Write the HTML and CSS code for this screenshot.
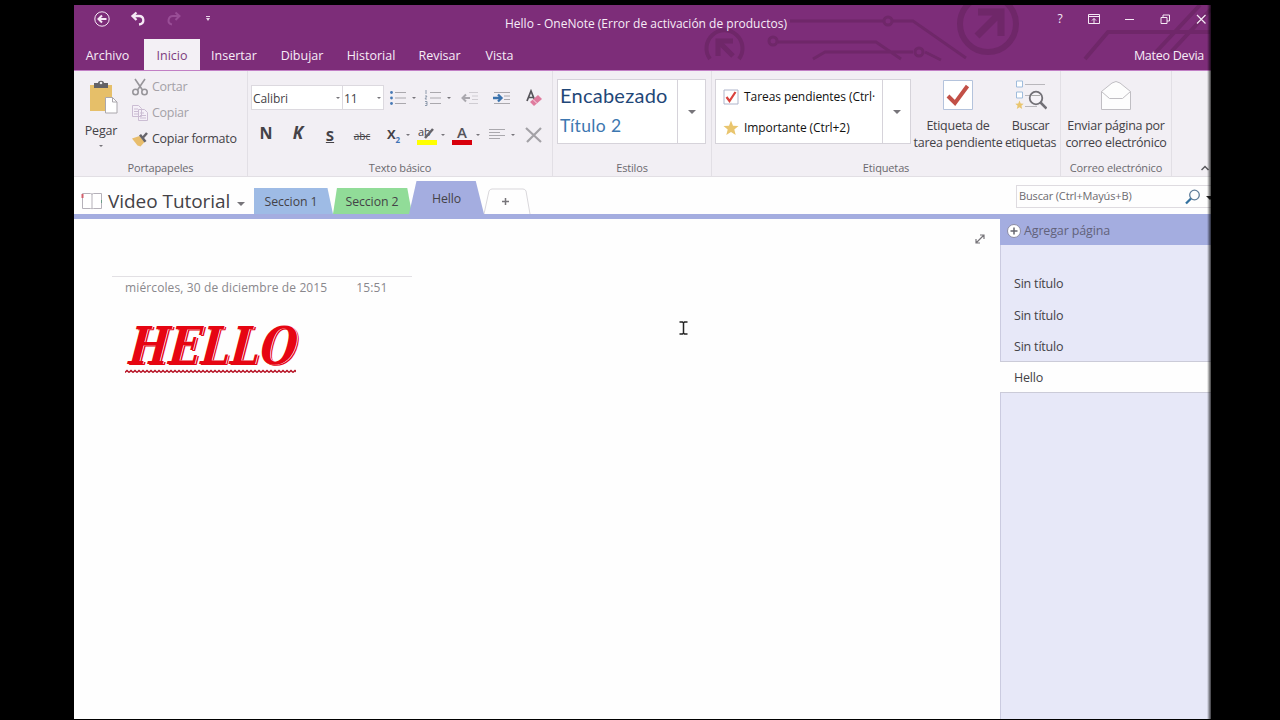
FILE: index.html
```
<!DOCTYPE html>
<html lang="es">
<head>
    <meta charset="UTF-8">
    <meta name="viewport" content="width=device-width, initial-scale=1.0">
    <title>Hello - OneNote</title>
    <link rel="stylesheet" href="styles.css">
</head>
<body>
    <div class="window">
        <header class="header">
            <svg class="circuit" width="1137" height="65" viewBox="74 5 1137 65" fill="none" stroke="#6f2769" stroke-width="3">
                <path d="M790 21h93M893 21h20L966 58M778 42h98l25 17M813 59l12-7h88M925 52l16 8"/>
                <circle cx="888" cy="21" r="4"/>
                <circle cx="773" cy="41" r="4"/>
                <circle cx="919" cy="52" r="4"/>
                <path d="M710 59a18 18 0 1 1 29 0" stroke-width="4"/>
                <path d="M718 56V41h15M719 42l14 14" stroke-width="5"/>
                <circle cx="988" cy="24" r="28" stroke-width="6"/>
                <path d="M978 12h23v24M1000 13l-23 23" stroke-width="7"/>
                <path d="M1085 59l23-27h102M1156 52l44-47M1171 52l40-43" stroke-width="4"/>
            </svg>
            <div class="titlebar">
                <div class="quick-access">
                    <svg width="16" height="16" viewBox="0 0 16 16" fill="none" stroke="#f5e9f5"><circle cx="8" cy="8" r="7.2"/><path d="M12.500 8H4.500M8 4.500L4.500 8 8 11.500" stroke-width="2"/></svg>
                    <svg width="16" height="16" viewBox="0 0 16 16" fill="none" stroke="#f5e9f5" stroke-width="2.300"><path d="M6.500 1.500L2.500 5l4 4M3 5h6c5 0 6.500 7.500 0 8.500"/></svg>
                    <svg width="16" height="16" viewBox="0 0 16 16" fill="none" stroke="#994d96" stroke-width="2"><path d="M9.500 1.500L13.500 5l-4 4M13 5H7c-5 0-6.500 7.500-1 8.500"/></svg>
                    <svg class="qa-more" width="6" height="6" viewBox="0 0 6 6" fill="#e8d4e8"><path d="M1 0h4v1H1zM1 2h4L3 5z"/></svg>
                </div>
                <div class="title">Hello - OneNote (Error de activación de productos)</div>
                <div class="window-buttons">
                    <span class="help">?</span>
                    <svg class="display" width="12" height="12" viewBox="0 0 12 12" fill="none" stroke="#f5e9f5"><path d="M.5 1.500h11v9H.5zM.5 3.500h11M6 10V5.500M4 7.500l2-2 2 2"/></svg>
                    <svg width="12" height="12" viewBox="0 0 12 12" stroke="#f5e9f5"><path d="M2 6.500h9"/></svg>
                    <svg width="12" height="12" viewBox="0 0 12 12" fill="none" stroke="#f5e9f5"><path d="M2 4.500h6v6H2zM4 4V2h6.500v6H8"/></svg>
                    <svg width="12" height="12" viewBox="0 0 12 12" stroke="#f5e9f5" stroke-width="1.200"><path d="M2 2l8.500 8.500M10.500 2L2 10.500"/></svg>
                </div>
            </div>
            <nav class="tabs">
                <a class="tab tab-file">Archivo</a>
                <a class="tab tab-home active">Inicio</a>
                <a class="tab tab-insert">Insertar</a>
                <a class="tab tab-draw">Dibujar</a>
                <a class="tab tab-history">Historial</a>
                <a class="tab tab-review">Revisar</a>
                <a class="tab tab-view">Vista</a>
                <span class="account">Mateo Devia</span>
            </nav>
        </header>

        <div class="ribbon">
            <section class="group group-clipboard">
                <div class="group-body">
                    <div class="paste">
                        <svg width="30" height="34" viewBox="0 0 30 34"><path d="M1 5h22v26H1z" fill="#e6bf69"/><path d="M5 3h4c0-3 6-3 6 0h4v5H5z" fill="#636266"/><circle cx="12" cy="3" r="1.300" fill="#eee"/><path d="M16.500 17.500h7l4.500 4.500v11H16.500z" fill="#fff" stroke="#aaa7ac"/><path d="M23.500 17.500V22H28" fill="none" stroke="#aaa7ac"/></svg>
                        <span>Pegar</span>
                        <i class="caret"></i>
                    </div>
                    <ul class="clip-list">
                        <li class="disabled"><svg width="16" height="18" viewBox="0 0 16 18" fill="none" stroke="#97959a" stroke-width="1.600"><path d="M3 1l7.500 11M13 1L5.500 12"/><circle cx="3.500" cy="14" r="2.700"/><circle cx="12.500" cy="14" r="2.700"/></svg>Cortar</li>
                        <li class="disabled"><svg width="16" height="18" viewBox="0 0 16 18" fill="#f5f0f8" stroke="#cbbdd3"><path d="M.5 1.500h6l3 3v8h-9zM6.500 5.500h6l3 3v8h-9z"/><path d="M2 5h4M2 7.500h4M2 10h4M8 9h4M8 11.500h6M8 14h6"/></svg>Copiar</li>
                        <li><svg width="16" height="18" viewBox="0 0 16 18"><path d="M0 8.500l7.500-2.500 5 6-4 4.500-3-1z" fill="#e8bd6c"/><path d="M7 5.500l2-1.500 5.500 7-2 1.500z" fill="#66646a"/><path d="M11 7.500L15 3" stroke="#66646a" stroke-width="2.500"/></svg>Copiar formato</li>
                    </ul>
                </div>
                <div class="group-label">Portapapeles</div>
            </section>

            <section class="group group-text">
                <div class="group-body">
                    <div class="row">
                        <div class="combo combo-font">Calibri<i class="caret"></i></div>
                        <div class="combo combo-size">11<i class="caret"></i></div>
                        <div class="split first"><svg width="18" height="16" viewBox="0 0 18 16"><path d="M6 2.500h11M6 8h11M6 13.500h11" stroke="#aaa8ad"/><g fill="#4779b5"><circle cx="2.500" cy="2.500" r="1.400"/><circle cx="2.500" cy="8" r="1.400"/><circle cx="2.500" cy="13.500" r="1.400"/></g></svg><i class="caret"></i></div>
                        <div class="split"><svg width="18" height="16" viewBox="0 0 18 16"><path d="M6 2.500h11M6 8h11M6 13.500h11" stroke="#aaa8ad"/><path d="M2 0v4M1 6h2l-2 3h2M1 11.500h2v4H1M1.500 13.500H3" stroke="#8e9aac" fill="none"/></svg><i class="caret"></i></div>
                        <div class="tool"><svg width="18" height="14" viewBox="0 0 18 14"><path d="M8 1.500h9M11 5h6M11 8.500h6M8 12.500h9" stroke="#cfccd2"/><path d="M9 7H2M5 3.500L1.500 7 5 10.500" stroke="#aaa8ae" stroke-width="2" fill="none"/></svg></div>
                        <div class="tool"><svg width="18" height="14" viewBox="0 0 18 14"><path d="M1 1.500h16M11 5h6M11 8.500h6M1 12.500h16" stroke="#aaa8ad"/><path d="M0 7h8M5 3.500L8.500 7 5 10.500" stroke="#3a72ad" stroke-width="2.300" fill="none"/></svg></div>
                        <div class="tool"><svg width="18" height="18" viewBox="0 0 18 18"><path d="M2 12L6 2l4 10M3.500 8.500h5" stroke="#56545a" stroke-width="1.700" fill="none"/><path d="M5 13l8-7 4 4-8 7z" fill="#df7b9e"/><path d="M8 10.500l4 4" stroke="#f6dce6"/></svg></div>
                    </div>
                    <div class="row">
                        <div class="tool bold">N</div>
                        <div class="tool italic">K</div>
                        <div class="tool underline">S</div>
                        <div class="tool strike">abc</div>
                        <div class="split sub"><span>X<sub>2</sub></span><i class="caret"></i></div>
                        <div class="split"><svg width="22" height="22" viewBox="0 0 22 22"><text class="ab" x="2" y="12">ab</text><path d="M17 5L9 14" stroke="#66646a" stroke-width="2.500"/><path d="M1 16h20v5H1z" fill="#ffff00"/></svg><i class="caret"></i></div>
                        <div class="split"><svg width="22" height="22" viewBox="0 0 22 22"><text class="letter" x="11" y="14" text-anchor="middle">A</text><path d="M1 16h20v5H1z" fill="#d8000c"/></svg><i class="caret"></i></div>
                        <div class="split"><svg width="16" height="12" viewBox="0 0 16 12"><path d="M0 .5h16M0 3.500h11M0 6.500h16M0 9.500h11" stroke="#aaa8ad"/></svg><i class="caret"></i></div>
                        <div class="tool"><svg width="18" height="16" viewBox="0 0 18 16"><path d="M1 1l15 14M16 1L2 15" stroke="#a3a1a6" stroke-width="2.200"/></svg></div>
                    </div>
                </div>
                <div class="group-label">Texto básico</div>
            </section>

            <section class="group group-styles">
                <div class="group-body">
                    <div class="gallery">
                        <div class="gallery-items">
                            <div class="style-h1">Encabezado</div>
                            <div class="style-h2">Título 2</div>
                        </div>
                        <div class="gallery-more"><i class="caret big"></i></div>
                    </div>
                </div>
                <div class="group-label">Estilos</div>
            </section>

            <section class="group group-tags">
                <div class="group-body">
                    <div class="gallery">
                        <div class="gallery-items">
                            <div class="tag"><svg width="16" height="16" viewBox="0 0 16 16"><path d="M1 1h14v14H1z" fill="#fff" stroke="#aeb5cb"/><path d="M3.500 8l3 4 6-9" stroke="#d9423d" stroke-width="2.200" fill="none"/></svg><span>Tareas pendientes (Ctrl·</span></div>
                            <div class="tag"><svg width="16" height="16" viewBox="0 0 16 16"><path d="M8 .5l2 5.200 5.500.3-4.200 3.500 1.400 5.500L8 12l-4.700 3 1.400-5.500L.5 6l5.500-.3z" fill="#e9c56e"/></svg><span>Importante (Ctrl+2)</span></div>
                        </div>
                        <div class="gallery-more"><i class="caret big"></i></div>
                    </div>
                    <div class="big-button todo">
                        <svg width="30" height="30" viewBox="0 0 30 30"><path d="M.5.5h29v29H.5z" fill="#fff" stroke="#b4c3dc"/><path d="M5 16l7 7L24.500 6" stroke="#c25047" stroke-width="4" fill="none"/></svg>
                        <span>Etiqueta de<br>tarea pendiente</span>
                    </div>
                    <div class="big-button find">
                        <svg width="32" height="30" viewBox="0 0 32 30" fill="none"><path d="M1.500 1h6v6h-6zM1.500 12h6v6h-6z" fill="#fff" stroke="#9fbcdc"/><path d="M10 4.500h20M10 15.500h6M10 26.500h12" stroke="#b9b7bc"/><path d="M4.500 20.500l1.200 3 3 .2-2.300 2 .8 3.200-2.700-1.700L1.800 29l.8-3.300-2.300-2 3-.2z" fill="#e9c56e"/><circle cx="21" cy="18" r="6.300" fill="#f6f3f8" stroke="#727076" stroke-width="1.800"/><path d="M16 15.500h9" stroke="#aaa"/><path d="M25.500 22.500l6 6" stroke="#727076" stroke-width="2.500"/></svg>
                        <span>Buscar<br>etiquetas</span>
                    </div>
                </div>
                <div class="group-label">Etiquetas</div>
            </section>

            <section class="group group-mail">
                <div class="group-body">
                    <div class="big-button">
                        <svg width="30" height="30" viewBox="0 0 30 30" fill="#fdfdfd" stroke="#c0bec3"><path d="M.5 11.500L11 3q4-3 8 0l10.500 8.500v18H.5z"/><path d="M.5 11.500l8 7h13l8-7" fill="none"/></svg>
                        <span>Enviar página por<br>correo electrónico</span>
                    </div>
                </div>
                <div class="group-label">Correo electrónico</div>
            </section>
            <svg class="collapse" width="8" height="6" viewBox="0 0 8 6" fill="none" stroke="#5a585d" stroke-width="1.500"><path d="M.5 5L4 1.500 7.500 5"/></svg>
        </div>

        <div class="sections">
            <svg class="notebook-icon" width="22" height="18" viewBox="0 0 22 18" fill="#fff" stroke="#b5b1b9"><path d="M1.500 1.500h8q1.500 0 1.500 1 0-1 1.500-1h8v15h-8q-1.500 0-1.500.5 0-.5-1.500-.5h-8zM11 2v15"/><path d="M1.500 2v4" stroke="#d35e6b" stroke-width="2"/><path d="M20.500 8v3" stroke="#6b9c87"/></svg>
            <span class="notebook">Video Tutorial</span>
            <i class="caret big"></i>
            <div class="section-tab blue">Seccion 1</div>
            <div class="section-tab green">Seccion 2</div>
            <div class="section-tab current">Hello</div>
            <svg class="new-section" width="48" height="26" viewBox="0 0 48 26" fill="none"><path d="M1 26L6 3q1-2 3-2h31q2 0 3 2l4 23" stroke="#d9d7db"/><path d="M19 13.500h7M22.500 10v7" stroke="#77757a" stroke-width="1.500"/></svg>
            <div class="search">
                <span>Buscar (Ctrl+Mayús+B)</span>
                <svg width="16" height="16" viewBox="0 0 16 16" fill="none"><circle cx="9.500" cy="6" r="4.800" stroke="#5f7d99" stroke-width="1.300"/><path d="M6 9.500l-5 5" stroke="#33719f" stroke-width="2.300"/></svg>
                <i class="caret dark"></i>
            </div>
        </div>

        <main class="content">
            <article class="page">
                <svg class="expand" width="10" height="10" viewBox="0 0 10 10" fill="none" stroke="#77757a" stroke-width="1.200"><path d="M1.500 8.500l7-7M5 1h4v4M1 5v4h4"/></svg>
                <div class="page-date"><span>miércoles, 30 de diciembre de 2015</span><span>15:51</span></div>
                <div class="hello">HELLO</div>
                <svg class="spelling" width="171" height="5" fill="none">
                    <defs><pattern id="wave" width="4" height="5" patternUnits="userSpaceOnUse"><path d="M0 3.500l2-2 2 2" stroke="#b3081b" stroke-width="1.300"/></pattern></defs>
                    <rect width="171" height="5" fill="url(#wave)"/>
                </svg>
                <svg class="cursor" width="9" height="14" viewBox="0 0 9 14" fill="none" stroke="#222" stroke-width="1.500"><path d="M.5 1h3l1 1 1-1h3M4.500 2v10M.5 13h3l1-1 1 1h3"/></svg>
            </article>
            <aside class="pages">
                <div class="add-page">
                    <svg width="14" height="14" viewBox="0 0 14 14"><circle cx="7" cy="7" r="6.500" fill="#fff" stroke="#8c8ca5"/><path d="M3.500 7h7M7 3.500v7" stroke="#65656f" stroke-width="1.500"/></svg>
                    Agregar página
                </div>
                <ul>
                    <li>Sin título</li>
                    <li>Sin título</li>
                    <li>Sin título</li>
                    <li class="selected">Hello</li>
                </ul>
            </aside>
        </main>
    </div>
</body>
</html>
```
FILE: styles.css
```
* {
    box-sizing: border-box;
}

body {
    margin: 0;
    height: 720px;
    overflow: hidden;
    background-color: #000;
    font-family: "Open Sans", "Noto Sans", sans-serif;
    font-size: 12.500px;
    color: #444247;
}

ul {
    list-style: none;
    margin: 0;
    padding: 0;
}

svg {
    display: block;
    flex-shrink: 0;
}

.window {
    position: relative;
    display: flex;
    flex-direction: column;
    width: 1137px;
    height: 714px;
    margin: 5px 0 0 74px;
    overflow: hidden;
    background-color: #fefefe;
    white-space: nowrap;
}

/* dark fade on the right edge of the window */
.window::after {
    content: "";
    position: absolute;
    top: 0;
    right: 0;
    width: 4px;
    height: 100%;
    background: linear-gradient(to right, rgba(0, 0, 0, 0), rgba(0, 0, 0, 0.75));
}

.caret {
    border: 2px solid transparent;
    border-top: 2.500px solid #77757a;
    border-bottom: 0;
    flex-shrink: 0;
}

.caret.big {
    border-width: 4px 4px 0;
}

.caret.dark {
    border-width: 4px 4px 0;
    border-top-color: #222;
}

/* header */
.header {
    position: relative;
    height: 65px;
    flex-shrink: 0;
    background-color: #7d2d79;
    color: #f7ecf7;
}

.circuit {
    position: absolute;
    top: 0;
    left: 0;
}

.titlebar {
    position: relative;
    display: flex;
    height: 34px;
}

.quick-access {
    display: flex;
    align-items: center;
    gap: 20px;
    width: 431px;
    padding: 0 0 7px 20px;
}

.qa-more {
    margin-left: 3px;
}

.title {
    font-size: 12px;
    line-height: 37px;
}

.window-buttons {
    display: flex;
    align-items: center;
    gap: 24px;
    margin-left: auto;
    padding: 0 4px 7px 0;
}

.display {
    margin: 0 -1px 0 1px;
}

.help {
    width: 8px;
    margin-right: -1px;
    font-size: 12px;
    text-align: center;
}

.tabs {
    position: relative;
    display: flex;
    height: 31px;
    line-height: 33px;
}

.tab {
    text-align: center;
}

.tab-file {
    width: 67px;
    margin-right: 3px;
}

.tab-home {
    width: 56px;
}

.tab-insert {
    width: 68px;
}

.tab-draw {
    width: 68px;
}

.tab-history {
    width: 70px;
}

.tab-review {
    width: 67px;
}

.tab-view {
    width: 53px;
}

.tab.active {
    background-color: #f3f0f5;
    color: #7d3c7d;
}

.account {
    margin-left: auto;
    margin-right: 7px;
    letter-spacing: -0.25px;
}

/* ribbon */
.ribbon {
    display: flex;
    height: 107px;
    flex-shrink: 0;
    background-color: #f2eff4;
    border-top: 1px solid #c27fc5;
    border-bottom: 1px solid #e2dfe4;
}

.group {
    display: flex;
    flex-direction: column;
    flex-shrink: 0;
    border-right: 1px solid #e2dfe5;
}

.group-body {
    display: flex;
    height: 87px;
}

.group-label {
    height: 18px;
    font-size: 11px;
    line-height: 20px;
    letter-spacing: -0.15px;
    text-align: center;
    color: #6b696e;
}

.group-clipboard {
    width: 174px;
}

.paste {
    display: flex;
    flex-direction: column;
    align-items: center;
    width: 54px;
    padding-top: 9px;
}

.paste svg {
    margin-left: 6px;
}

.paste span {
    height: 31px;
    line-height: 34px;
    letter-spacing: -0.2px;
}

.clip-list {
    padding: 3px 0 0 4px;
    letter-spacing: -0.3px;
}

.clip-list li {
    display: flex;
    align-items: center;
    gap: 4px;
    height: 26px;
    padding-bottom: 1px;
}

.disabled {
    color: #a4a1a7;
}

.group-text {
    width: 305px;
}

.group-text .group-body {
    flex-direction: column;
    padding: 14px 0 0 3px;
}

.row {
    display: flex;
    align-items: center;
    height: 25px;
}

.row + .row {
    margin-top: 12px;
    margin-left: -1px;
}

.combo {
    display: flex;
    align-items: center;
    justify-content: space-between;
    height: 25px;
    padding: 1px 2px 0 1px;
    border: 1px solid #dcd9df;
    background-color: #fff;
    font-size: 12px;
}

.combo-font {
    width: 92px;
    letter-spacing: -0.1px;
}

.combo-size {
    width: 42px;
    margin-left: -1px;
}

.tool {
    display: flex;
    justify-content: center;
    width: 32px;
    font-size: 16px;
}

.split {
    display: flex;
    align-items: center;
    width: 35px;
}

.split .caret {
    margin-right: 3px;
}

.split > span {
    width: 28px;
    text-align: center;
}

.split > svg {
    margin: 0 auto;
    overflow: visible;
}

.bold,
.italic {
    padding-bottom: 4px;
    font-weight: bold;
}

.italic {
    font-size: 17px;
    font-style: italic;
}

.underline {
    padding-top: 1px;
    font-size: 15px;
    font-weight: bold;
    text-decoration: underline;
}

.strike {
    padding-top: 2px;
    font-size: 10px;
    text-decoration: line-through;
}

.sub > span {
    padding-left: 3px;
    font-size: 13px;
    font-weight: bold;
}

.sub sub {
    font-size: 8px;
    color: #3f73b5;
}

.ab {
    font-size: 11px;
    fill: #444247;
}

.letter {
    font-size: 15px;
    font-weight: 600;
    fill: #55535a;
}

.gallery {
    display: flex;
    height: 65px;
    border: 1px solid #d6d3da;
    background-color: #fff;
}

.gallery-more {
    display: flex;
    align-items: center;
    justify-content: center;
    width: 28px;
    border-left: 1px solid #d6d3da;
}

.group-styles {
    width: 159px;
}

.group-styles .group-body {
    padding: 8px 0 0 4px;
}

.group-styles .gallery-items {
    width: 119px;
    padding-left: 2px;
    font-family: Lato, sans-serif;
}

.style-h1 {
    font-size: 20px;
    line-height: 31px;
    letter-spacing: 0.25px;
    color: #1f4778;
}

.style-h2 {
    font-size: 17.500px;
    line-height: 30px;
    letter-spacing: 0.35px;
    color: #3d77b0;
}

.group-tags {
    width: 349px;
}

.group-tags .group-body {
    padding: 8px 0 0 3px;
}

.group-tags .gallery-items {
    width: 166px;
    padding: 1px 5px 0 7px;
    color: #111;
}

.tag {
    display: flex;
    align-items: center;
    gap: 5px;
    height: 31px;
    font-size: 12px;
    letter-spacing: -0.07px;
}

.big-button {
    display: flex;
    flex-direction: column;
    align-items: center;
    padding-top: 1px;
    line-height: 16.500px;
    letter-spacing: -0.27px;
    text-align: center;
}

.big-button span {
    margin-top: 8px;
}

.todo {
    width: 94px;
}

.find {
    width: 51px;
    letter-spacing: -0.35px;
}

.group-mail {
    width: 111px;
}

.group-mail .group-body {
    justify-content: center;
    padding-top: 8px;
}

.collapse {
    align-self: flex-end;
    margin: 0 2px 5px auto;
}

/* notebook and section tabs */
.sections {
    display: flex;
    align-items: flex-end;
    height: 42px;
    flex-shrink: 0;
    border-bottom: 5px solid #a4ade0;
}

.notebook-icon {
    margin: 0 5px 4px 7px;
}

.notebook {
    width: 128px;
    height: 27px;
    font-size: 19px;
    line-height: 28px;
    letter-spacing: -0.05px;
}

.sections > .caret {
    margin: 0 9px 8px 1px;
}

.section-tab {
    height: 26px;
    font-size: 12.300px;
    line-height: 28px;
    letter-spacing: -0.1px;
    text-align: center;
}

.blue {
    width: 79px;
    padding-right: 5px;
    background-color: #9ebbe5;
    clip-path: polygon(0 0, 93% 0, 100% 100%, 0 100%);
}

.green {
    width: 79px;
    padding-right: 1px;
    background-color: #91dc98;
    clip-path: polygon(5% 0, 94% 0, 100% 100%, 0 100%);
}

.current {
    width: 75px;
    height: 33px;
    margin-left: -3px;
    line-height: 36px;
    background-color: #a4ade0;
    clip-path: polygon(10% 0, 89% 0, 100% 100%, 0 100%);
}

.new-section {
    margin-left: -1px;
}

.search {
    display: flex;
    align-items: center;
    width: 195px;
    height: 23px;
    margin: 0 0 6px auto;
    padding-left: 2px;
    border: 1px solid #dedbe0;
    border-right: 0;
    font-size: 11px;
    letter-spacing: -0.15px;
    color: #6d6b70;
}

.search span {
    padding-bottom: 3px;
}

.search svg {
    margin-left: auto;
}

.search .caret {
    margin: 3px -3px 0 5px;
}

/* page */
.content {
    display: flex;
    flex: 1;
}

.page {
    position: relative;
    flex: 1;
    padding-left: 38px;
}

.expand {
    margin: 15px 15px 0 auto;
}

.page-date {
    display: flex;
    gap: 29px;
    width: 300px;
    margin-top: 32px;
    padding-left: 13px;
    border-top: 1px solid #e2e0e4;
    font-size: 12px;
    line-height: 21px;
    letter-spacing: 0.12px;
    color: #89878c;
}

.hello {
    width: 220px;
    height: 71px;
    margin-left: 16px;
    font-family: "DejaVu Serif", serif;
    font-size: 52px;
    font-weight: bold;
    font-style: italic;
    line-height: 95px;
    color: #e60512;
    text-shadow: 1px 0 #fff, 2.500px 1px #e60512;
    transform: scaleX(0.81) skewX(-7deg);
    transform-origin: left 66px;
}

.spelling {
    margin-left: 13px;
}

.cursor {
    position: absolute;
    top: 102px;
    left: 605px;
}

.pages {
    width: 211px;
    background-color: #e7e8f8;
    border-left: 1px solid #cbcbe0;
}

.add-page {
    display: flex;
    align-items: center;
    gap: 3px;
    height: 26px;
    margin-left: -1px;
    padding: 0 0 3px 7px;
    background-color: #a4ade0;
    letter-spacing: -0.15px;
    color: #62627a;
}

.pages ul {
    padding-top: 23px;
    letter-spacing: -0.2px;
}

.pages li {
    height: 31.500px;
    padding-left: 13px;
    line-height: 31px;
}

.pages .selected {
    height: 32px;
    margin: -2px 0 0 -1px;
    padding-left: 14px;
    line-height: 32px;
    background-color: #fefefe;
    border-top: 1px solid #cbcbd8;
    border-bottom: 1px solid #cbcbd8;
}
```
